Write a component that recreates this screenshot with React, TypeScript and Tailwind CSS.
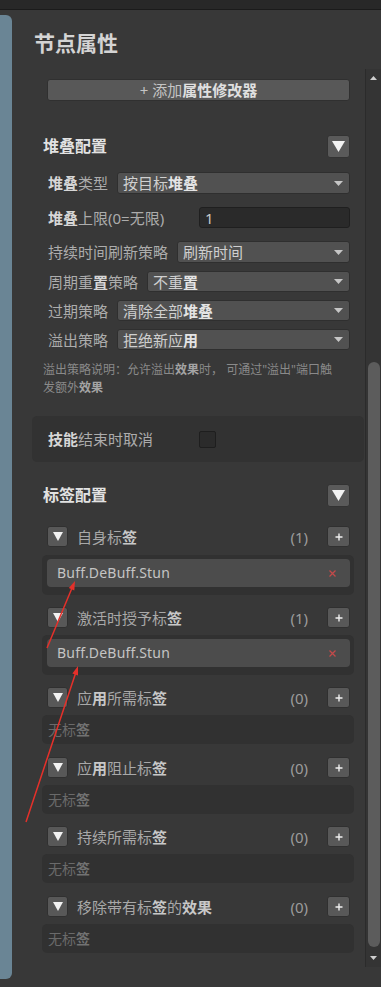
import React from "react";

// text with *bold* segments (the fallback glyphs in the reference look heavier)
function Rich({ t, boldCls = "font-bold text-[#d6d6d6]" }: { t: string; boldCls?: string }) {
  return (
    <>
      {t.split("*").map((s, i) =>
        i % 2 ? (
          <span key={i} className={boldCls}>
            {s}
          </span>
        ) : (
          <span key={i}>{s}</span>
        )
      )}
    </>
  );
}

function Tri({ w, h, fill }: { w: number; h: number; fill: string }) {
  return (
    <svg width={w} height={h} viewBox={`0 0 ${w} ${h}`}>
      <polygon points={`0,0 ${w},0 ${w / 2},${h}`} fill={fill} />
    </svg>
  );
}

const rows = [
  { label: "*堆叠*类型", lw: "w-[69px]", kind: "select", value: "按目标*堆叠*", cls: "mt-[14px] h-[22px]" },
  { label: "*堆叠*上限(0=无限)", lw: "w-[151px]", kind: "input", value: "1", cls: "mt-[13px] h-[21px]" },
  { label: "持续时间刷新策略", lw: "w-[129px]", kind: "select", value: "刷新时间", cls: "mt-[13px] h-[22px]" },
  { label: "周期重*置*策略", lw: "w-[99px]", kind: "select", value: "不重*置*", cls: "mt-[8px] h-[21px]" },
  { label: "过期策略", lw: "w-[69px]", kind: "select", value: "清除全部*堆叠*", cls: "mt-[8px] h-[21px]" },
  { label: "溢出策略", lw: "w-[69px]", kind: "select", value: "拒绝新应*用*", cls: "mt-[8px] h-[21px]" },
];

const groups = [
  { label: "自身标*签*", count: "(1)", tag: "Buff.DeBuff.Stun", mt: "mt-[19px]", gap: "mt-[8px]" },
  { label: "激活时授予标*签*", count: "(1)", tag: "Buff.DeBuff.Stun", mt: "mt-[12px]", gap: "mt-[7px]" },
  { label: "应*用*所需标*签*", count: "(0)", tag: "", mt: "mt-[12px]", gap: "mt-[7px]" },
  { label: "应*用*阻止标*签*", count: "(0)", tag: "", mt: "mt-[13px]", gap: "mt-[7px]" },
  { label: "持续所需标*签*", count: "(0)", tag: "", mt: "mt-[12px]", gap: "mt-[7px]" },
  { label: "移除带有标*签*的*效果*", count: "(0)", tag: "", mt: "mt-[13px]", gap: "mt-[7px]" },
];

function SectionHeader({ title, cls }: { title: string; cls: string }) {
  return (
    <div className={`ml-[31px] w-[307px] h-[23px] flex items-center justify-between ${cls}`}>
      <span className="text-[16px] leading-[23px] font-bold text-[#e2e2e2]">{title}</span>
      <div className="w-[23px] h-[23px] rounded-[3px] bg-[#5a5a5a] border border-[#333] flex items-center justify-center">
        <Tri w={13} h={11} fill="#f2f2f2" />
      </div>
    </div>
  );
}

export default function App() {
  return (
    <div className="relative w-[381px] h-[987px] overflow-hidden bg-[#383838] font-['Noto_Sans','Noto_Sans_CJK_SC',sans-serif]">
      <div className="h-[10px] bg-[#282828] border-b border-[#1b1b1b]" />
      <div className="flex h-[977px]">
        {/* left strip */}
        <div className="w-[12px] shrink-0 mt-[5px] h-[964px] bg-[#6a8595] rounded-r-[6px]" />

        {/* content */}
        <div className="w-[353px] shrink-0 flex flex-col">
          <div className="ml-[22px] mt-[19px] text-[21px] leading-[28px] font-bold text-[#d4d4d4]">节点属性</div>

          <div className="ml-[35px] mt-[22px] w-[303px] h-[22px] rounded-[3px] bg-[#585858] border border-[#303030] flex items-center justify-center text-[15px] leading-[20px] text-[#c4c4c4]">
            <Rich t="+ 添加*属性修改器*" boldCls="font-bold text-[#e0e0e0]" />
          </div>

          <SectionHeader title="堆叠配置" cls="mt-[34px]" />

          {rows.map((r, i) => (
            <div key={i} className={`ml-[36px] w-[302px] flex items-center ${r.cls}`}>
              <div className={`${r.lw} shrink-0 text-[15px] leading-[20px] text-[#acacac] whitespace-nowrap`}>
                <Rich t={r.label} />
              </div>
              {r.kind === "select" ? (
                <div className="flex-1 h-full rounded-[3px] bg-[#515151] border border-[#2f2f2f] flex items-center justify-between pl-[5px] pr-[6px] text-[15px] leading-[20px] text-[#cfcfcf]">
                  <span>
                    <Rich t={r.value} boldCls="font-bold text-[#e4e4e4]" />
                  </span>
                  <Tri w={9} h={5} fill="#c6c6c6" />
                </div>
              ) : (
                <div className="flex-1 h-full rounded-[3px] bg-[#2a2a2a] border border-[#1f1f1f] flex items-center pl-[5px] text-[15px] leading-[20px] text-[#c8c8c8]">
                  {r.value}
                </div>
              )}
            </div>
          ))}

          <div className="ml-[31px] mt-[11px] text-[12px] leading-[18px] text-[#8a8a8a] whitespace-nowrap">
            <Rich t={'溢出策略说明：允许溢出*效果*时， 可通过"溢出"端口触'} boldCls="font-bold text-[#a4a4a4]" />
            <br />
            <Rich t="发额外*效果*" boldCls="font-bold text-[#a4a4a4]" />
          </div>

          <div className="ml-[20px] mt-[19px] w-[332px] h-[46px] rounded-[5px] bg-[#323232] flex items-center pl-[16px]">
            <div className="w-[151px] text-[15px] leading-[20px] text-[#acacac]">
              <Rich t="*技能*结束时取消" />
            </div>
            <div className="w-[17px] h-[17px] rounded-[2px] bg-[#2b2b2b] border border-[#1e1e1e]" />
          </div>

          <SectionHeader title="标签配置" cls="mt-[22px]" />

          {groups.map((g, i) => (
            <div key={i} className={g.mt}>
              <div className="ml-[35px] w-[303px] h-[21px] flex items-center">
                <div className="w-[21px] h-[21px] rounded-[3px] bg-[#585858] border border-[#303030] flex items-center justify-center">
                  <Tri w={10} h={9} fill="#f2f2f2" />
                </div>
                <div className="ml-[9px] flex-1 text-[15px] leading-[20px] text-[#a8a8a8] whitespace-nowrap">
                  <Rich t={g.label} boldCls="font-bold text-[#c8c8c8]" />
                </div>
                <span className="mr-[19px] text-[15px] leading-[20px] text-[#9c9c9c]">{g.count}</span>
                <div className="w-[23px] h-[21px] rounded-[3px] bg-[#585858] border border-[#303030] flex items-center justify-center">
                  <svg width="8" height="8" viewBox="0 0 8 8">
                    <path d="M4 0.5V7.5M0.5 4H7.5" stroke="#f0f0f0" strokeWidth="1.4" />
                  </svg>
                </div>
              </div>

              {g.tag ? (
                <div className={`ml-[30px] w-[312px] h-[40px] rounded-[5px] bg-[#313131] pl-[5px] pr-[4px] pt-[4px] ${g.gap}`}>
                  <div className="h-[28px] rounded-[4px] bg-[#4c4c4c] flex items-center justify-between pl-[10px] pr-[14px]">
                    <span className="text-[14px] leading-[20px] text-[#c4c4c4] tracking-[0.2px]">{g.tag}</span>
                    <svg width="7" height="7" viewBox="0 0 7 7">
                      <path d="M0.5 0.5L6.5 6.5M6.5 0.5L0.5 6.5" stroke="#c24a4a" strokeWidth="1.3" />
                    </svg>
                  </div>
                </div>
              ) : (
                <div className={`ml-[30px] w-[312px] h-[29px] rounded-[5px] bg-[#313131] flex items-center pl-[6px] text-[14px] leading-[20px] text-[#6a6a6a] ${g.gap}`}>
                  <Rich t="无标*签*" boldCls="font-bold text-[#727272]" />
                </div>
              )}
            </div>
          ))}
        </div>

        {/* scrollbar */}
        <div className="w-[16px] shrink-0 mt-[59px] h-[898px] bg-[#343434] border-l border-[#2b2b2b] flex flex-col items-center">
          <div className="mt-[7px] rotate-180">
            <Tri w={7} h={4} fill="#cfcfcf" />
          </div>
          <div className="mt-[282px] w-[12px] h-[585px] rounded-full bg-[#5c5c5c]" />
          <div className="mt-[9px]">
            <Tri w={7} h={4} fill="#cfcfcf" />
          </div>
        </div>
      </div>

      {/* red annotation arrows */}
      <svg className="absolute inset-0 pointer-events-none" width="381" height="987" viewBox="0 0 381 987">
        <line x1="47" y1="648" x2="72" y2="588" stroke="#e5302a" strokeWidth="1.5" />
        <polygon points="75,581 74.3,590.5 68.8,588.1" fill="#e5302a" />
        <line x1="26" y1="822" x2="76" y2="672" stroke="#e5302a" strokeWidth="1.5" />
        <polygon points="78,666 78,675.5 72.4,673.6" fill="#e5302a" />
      </svg>
    </div>
  );
}
